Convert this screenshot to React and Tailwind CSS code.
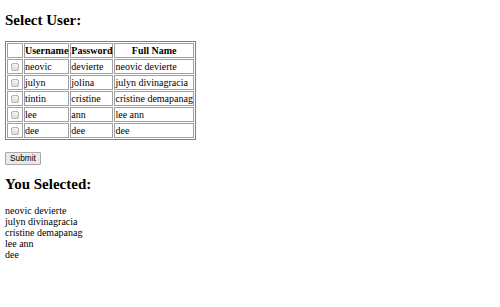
import React from "react";

const users = [
  { username: "neovic", password: "devierte", fullName: "neovic devierte" },
  { username: "julyn", password: "jolina", fullName: "julyn divinagracia" },
  { username: "tintin", password: "cristine", fullName: "cristine demapanag" },
  { username: "lee", password: "ann", fullName: "lee ann" },
  { username: "dee", password: "dee", fullName: "dee" },
];

const cell = "border border-[#a0a0a0] px-0 py-[1px] leading-[11px] whitespace-nowrap";

const Check = () => (
  <span className="mx-[3px] my-[2px] block h-[8px] w-[8px] rounded-[2px] border border-[#b5b5b5] bg-gradient-to-b from-[#f4f4f4] to-[#dedede]" />
);

export default function App() {
  return (
    <div className="min-h-screen bg-white p-[5px] font-['Liberation_Serif',serif] text-[10px] text-black">
      <h2 className="mt-[7px] mb-[12px] text-[15px] font-bold leading-[17px]">
        Select User:
      </h2>

      <form>
        <table className="border-separate border-spacing-[1px] border border-[#808080]">
          <thead>
            <tr>
              <th className={cell}></th>
              <th className={`${cell} font-bold`}>Username</th>
              <th className={`${cell} font-bold`}>Password</th>
              <th className={`${cell} font-bold`}>Full Name</th>
            </tr>
          </thead>
          <tbody>
            {users.map((u) => (
              <tr key={u.username}>
                <td className="border border-[#a0a0a0] p-0 align-middle">
                  <Check />
                </td>
                <td className={cell}>{u.username}</td>
                <td className={cell}>{u.password}</td>
                <td className={cell}>{u.fullName}</td>
              </tr>
            ))}
          </tbody>
        </table>

        <div className="mt-[10px]">
          <button
            type="button"
            className="h-[13px] rounded-[1px] border border-[#a9a9a9] bg-[#e9e9e9] px-[4px] font-['Liberation_Sans',sans-serif] text-[8.3px] leading-[11px] text-black"
          >
            Submit
          </button>
        </div>
      </form>

      <h2 className="mt-[11px] mb-[12px] text-[15px] font-bold leading-[17px]">
        You Selected:
      </h2>

      <div className="leading-[11px]">
        {users.map((u) => (
          <div key={u.username}>{u.fullName}</div>
        ))}
      </div>
    </div>
  );
}
